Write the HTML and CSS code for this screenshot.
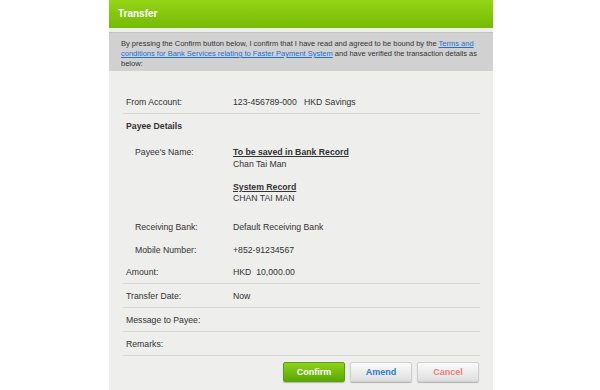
FILE: index.html
```html
<!DOCTYPE html>
<html>
<head>
<meta charset="utf-8">
<link rel="stylesheet" href="styles.css">
</head>
<body>
<div class="panel">
  <div class="header">Transfer</div>
  <div class="notice">By pressing the Confirm button below, I confirm that I have read and agreed to be bound by the <a href="#">Terms and conditions for Bank Services relating to Faster Payment System</a> and have verified the transaction details as below:</div>
  <div class="content">
    <div class="row sep"><span class="label">From Account:</span><span class="value">123-456789-000&nbsp;&nbsp;&nbsp;HKD Savings</span></div>
    <div class="row section"><span class="label bold">Payee Details</span></div>
    <div class="row sub name">
      <span class="label">Payee's Name:</span>
      <span class="value multi">
        <span class="head">To be saved in Bank Record</span>
        <span>Chan Tai Man</span>
        <span class="blank"></span>
        <span class="head">System Record</span>
        <span>CHAN TAI MAN</span>
      </span>
    </div>
    <div class="row sub"><span class="label">Receiving Bank:</span><span class="value">Default Receiving Bank</span></div>
    <div class="row sub"><span class="label">Mobile Number:</span><span class="value">+852-91234567</span></div>
    <div class="row sep amount"><span class="label">Amount:</span><span class="value">HKD&nbsp;&nbsp;10,000.00</span></div>
    <div class="row sep"><span class="label">Transfer Date:</span><span class="value">Now</span></div>
    <div class="row sep"><span class="label">Message to Payee:</span><span class="value"></span></div>
    <div class="row sep"><span class="label">Remarks:</span><span class="value"></span></div>
    <div class="buttons">
      <button class="btn confirm">Confirm</button>
      <button class="btn amend">Amend</button>
      <button class="btn cancel">Cancel</button>
    </div>
  </div>
</div>
</body>
</html>
```
FILE: styles.css
```css
html, body {
  margin: 0;
  padding: 0;
  background: #ffffff;
}
body {
  font-family: "Liberation Sans", Arial, sans-serif;
  color: #333333;
  font-size: 8.7px;
}
.panel {
  margin-left: 109px;
  width: 384px;
  height: 390px;
  background: #eeeeec;
  display: flex;
  flex-direction: column;
}
.header {
  height: 28px;
  line-height: 28px;
  padding-left: 9px;
  background: linear-gradient(#94d414, #74bb06);
  color: #ffffff;
  font-weight: bold;
  font-size: 10px;
}
.notice {
  margin-top: 4px;
  background: #d1d1d1;
  border-top: 1px solid #c2c2c2;
  padding: 6px 10px 2px 12px;
  line-height: 10px;
  height: 30px;
  font-size: 7.5px;
  color: #333333;
}
.notice a {
  color: #1f6fd8;
  text-decoration: underline;
}
.content {
  padding: 19px 13px 0 14px;
}
.row {
  display: grid;
  grid-template-columns: 107px 1fr;
  padding: 6px 3px;
  line-height: 12px;
}
.row.sep {
  border-bottom: 1px solid #d6d6d4;
  padding-bottom: 5px;
}
.row.amount {
  padding-top: 5px;
}
.bold {
  font-weight: bold;
}
.row.sub {
  grid-template-columns: 98px 1fr;
  padding: 6px 3px 5px 12px;
}
.row.name {
  padding-top: 9px;
  padding-bottom: 10px;
  line-height: 11.5px;
}
.multi {
  display: flex;
  flex-direction: column;
}
.head {
  font-weight: bold;
  text-decoration: underline;
}
.blank {
  height: 11.5px;
}
.buttons {
  display: flex;
  justify-content: flex-end;
  gap: 5px;
  padding-top: 6px;
  padding-right: 1px;
}
.btn {
  width: 62px;
  height: 20px;
  border-radius: 2px;
  font-family: "Liberation Sans", Arial, sans-serif;
  font-weight: bold;
  font-size: 9px;
  padding: 0;
  cursor: pointer;
}
.confirm {
  background: linear-gradient(#8fd21a, #5aa804);
  border: 1px solid #5e9e12;
  color: #ffffff;
  box-shadow: 0 1px 1px rgba(0,0,0,0.25);
}
.amend, .cancel {
  background: linear-gradient(#fbfbfb, #dedede);
  border: 1px solid #cfcfcf;
  box-shadow: 0 1px 1px rgba(0,0,0,0.25);
}
.amend {
  color: #2d7ad3;
}
.cancel {
  color: #ef7d80;
}
```
